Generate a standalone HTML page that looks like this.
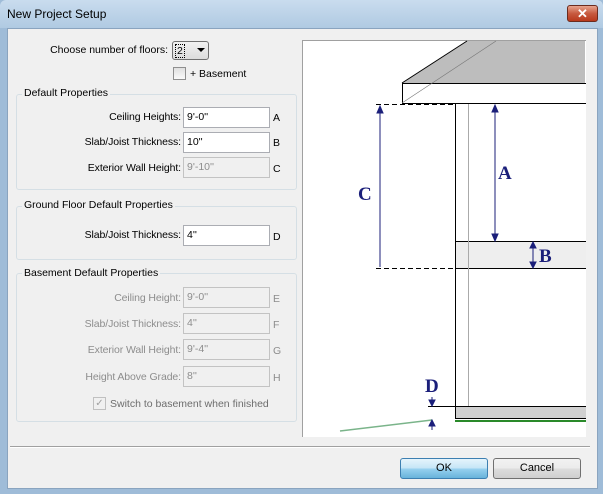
<!DOCTYPE html>
<html><head><style>
body{margin:0;width:603px;height:494px;overflow:hidden;background:#9fbcd8;font-family:"Liberation Sans",sans-serif;font-size:10.5px;color:#000;position:relative}
.a{position:absolute}
.title{left:0;top:0;width:603px;height:28px;background:linear-gradient(#c9dcee,#b0cae2);border-radius:6px 6px 0 0}
.client{left:7px;top:28px;width:589px;height:459px;background:#f0f0f0;border:1px solid #8aa4bf}
.grp{border:1px solid #d5dfe5;border-radius:3px}
.lg{background:#f0f0f0;padding:0 2px}
.lbl{text-align:right;width:170px;letter-spacing:-0.1px}
.in{border:1px solid #abadb3;background:#fff;line-height:18px;padding-left:3px;box-sizing:border-box;width:87px;height:21px}
.dis{background:#f0f0f0;color:#8d8d8d;border-color:#c3c3c3}
.g{color:#8d8d8d}
.btn{height:21px;border:1px solid #707070;border-radius:3px;background:linear-gradient(#f2f2f2,#ebebeb 50%,#dddddd 51%,#cfcfcf);text-align:center;line-height:19px;box-sizing:border-box;font-size:11px}
</style></head><body>
<div class="a title"></div>
<div class="a" style="left:7px;top:7px;font-size:12px">New Project Setup</div>
<div class="a" style="left:567px;top:5px;width:31px;height:17px;border-radius:3px;border:1px solid #6b2b1e;background:linear-gradient(#e8a48e,#c75a3f 50%,#b8391c);box-sizing:border-box;color:#fff;font-weight:bold;text-align:center;line-height:15px;font-size:13px">✕</div>
<div class="a client"></div>

<div class="a" style="left:20px;top:44px;width:148px;text-align:right">Choose number of floors:</div>
<div class="a" style="left:172px;top:41px;width:37px;height:19px;border:1px solid #707070;border-radius:3px;background:linear-gradient(#f2f2f2,#dcdcdc);box-sizing:border-box"><span style="position:absolute;left:2px;top:2px;border:1px dotted #000;padding:0 1px;line-height:12px">2</span><span style="position:absolute;left:24px;top:6px;border-left:4px solid transparent;border-right:4px solid transparent;border-top:4px solid #000"></span></div>
<div class="a" style="left:173px;top:67px;width:13px;height:13px;border:1px solid #8f8f8f;background:linear-gradient(#e0e0e0,#fafafa);box-sizing:border-box"></div>
<div class="a" style="left:190px;top:68px">+ Basement</div>

<div class="a grp" style="left:16px;top:94px;width:279px;height:94px"></div>
<div class="a lg" style="left:22px;top:87px">Default Properties</div>
<div class="a lbl" style="left:11px;top:111px">Ceiling Heights:</div>
<div class="a in" style="left:183px;top:107px">9'-0''</div><div class="a" style="left:273px;top:112px">A</div>
<div class="a lbl" style="left:11px;top:136px">Slab/Joist Thickness:</div>
<div class="a in" style="left:183px;top:132px">10''</div><div class="a" style="left:273px;top:137px">B</div>
<div class="a lbl" style="left:11px;top:162px">Exterior Wall Height:</div>
<div class="a in dis" style="left:183px;top:157px">9'-10''</div><div class="a" style="left:273px;top:163px">C</div>

<div class="a grp" style="left:16px;top:206px;width:279px;height:52px"></div>
<div class="a lg" style="left:22px;top:199px">Ground Floor Default Properties</div>
<div class="a lbl" style="left:11px;top:229px">Slab/Joist Thickness:</div>
<div class="a in" style="left:183px;top:225px">4''</div><div class="a" style="left:273px;top:231px">D</div>

<div class="a grp" style="left:16px;top:273px;width:279px;height:147px"></div>
<div class="a lg" style="left:22px;top:267px">Basement Default Properties</div>
<div class="a lbl g" style="left:11px;top:292px">Ceiling Height:</div>
<div class="a in dis" style="left:183px;top:287px">9'-0''</div><div class="a g" style="left:273px;top:293px">E</div>
<div class="a lbl g" style="left:11px;top:318px">Slab/Joist Thickness:</div>
<div class="a in dis" style="left:183px;top:313px">4''</div><div class="a g" style="left:273px;top:319px">F</div>
<div class="a lbl g" style="left:11px;top:344px">Exterior Wall Height:</div>
<div class="a in dis" style="left:183px;top:339px">9'-4''</div><div class="a g" style="left:273px;top:345px">G</div>
<div class="a lbl g" style="left:11px;top:371px">Height Above Grade:</div>
<div class="a in dis" style="left:183px;top:366px">8''</div><div class="a g" style="left:273px;top:372px">H</div>
<div class="a" style="left:93px;top:397px;width:13px;height:13px;border:1px solid #c0c0c0;box-sizing:border-box;color:#a0a0a0;font-size:10px;line-height:11px;text-align:center">✓</div>
<div class="a" style="left:110px;top:398px;color:#6d6d6d">Switch to basement when finished</div>

<svg class="a" style="left:302px;top:40px" width="284" height="397" viewBox="302 40 284 397">
<rect x="302" y="40" width="284" height="397" fill="#fff"/>
<line x1="302.5" y1="40" x2="302.5" y2="437" stroke="#a0a0a0"/>
<line x1="302" y1="40.5" x2="586" y2="40.5" stroke="#a0a0a0"/>
<polygon points="402,83 467,41 585,41 585,83" fill="#bdbdbd"/>
<line x1="402" y1="83" x2="467" y2="41" stroke="#000"/>
<rect x="402.5" y="83.5" width="184" height="20" fill="#fff" stroke="#000"/>
<line x1="402" y1="103" x2="496" y2="41" stroke="#777" stroke-width=".6"/>
<line x1="455" y1="103.5" x2="586" y2="103.5" stroke="#000"/>
<line x1="376" y1="104.5" x2="455" y2="104.5" stroke="#000" stroke-dasharray="5,3"/>
<rect x="455.5" y="241.5" width="131" height="27" fill="#eeeeee" stroke="#000"/>
<line x1="376" y1="268.5" x2="455" y2="268.5" stroke="#000" stroke-dasharray="5,3"/>
<line x1="455.5" y1="103" x2="455.5" y2="419" stroke="#000"/>
<line x1="468.5" y1="104" x2="468.5" y2="406" stroke="#aaa"/>
<rect x="455.5" y="406.5" width="131" height="12" fill="#d0d0d0" stroke="#000"/>
<line x1="428" y1="406.5" x2="456" y2="406.5" stroke="#000"/>
<line x1="455" y1="421" x2="586" y2="421" stroke="#2a8a2a" stroke-width="2"/>
<line x1="340" y1="431" x2="432" y2="420" stroke="#7ab48a" stroke-width="1.5"/>
<g stroke="#1b1f7a" fill="#1b1f7a">
<line x1="380" y1="108" x2="380" y2="267"/><polygon points="377,113 380,106 383,113"/>
<line x1="495" y1="107" x2="495" y2="239"/><polygon points="492,112 495,105 498,112"/><polygon points="492,234 495,241 498,234"/>
<line x1="533" y1="244" x2="533" y2="267"/><polygon points="530,248 533,242 536,248"/><polygon points="530,262 533,268 536,262"/>
<line x1="432" y1="397" x2="432" y2="405"/><polygon points="429,400 432,406 435,400"/>
<line x1="432" y1="421" x2="432" y2="430"/><polygon points="429,426 432,420 435,426"/>
</g>
<g font-family="Liberation Serif,serif" font-weight="bold" font-size="19" fill="#1b1f7a">
<text x="358" y="200">C</text><text x="498" y="179">A</text><text x="539" y="262">B</text><text x="425" y="392">D</text>
</g>
</svg>

<div class="a" style="left:10px;top:446px;width:580px;height:1px;background:#a0a0a0;border-bottom:1px solid #fff"></div>
<div class="a btn" style="left:400px;top:458px;width:88px;border-color:#3c7fb1;background:linear-gradient(#e5f4fc,#c4e5f6 50%,#98d1ef 51%,#68b3db)">OK</div>
<div class="a btn" style="left:493px;top:458px;width:88px">Cancel</div>
</body></html>
